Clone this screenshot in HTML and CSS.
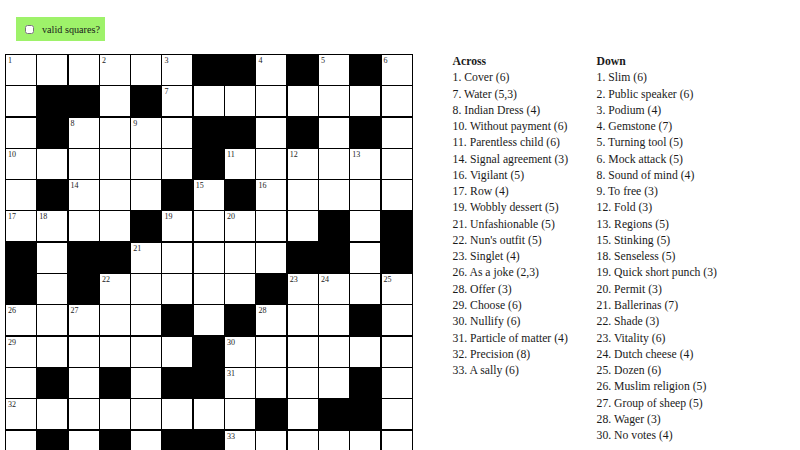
FILE: index.html
```html
<!DOCTYPE html>
<html>
<head>
<meta charset="utf-8">
<link rel="stylesheet" href="styles.css">
</head>
<body>
<div class="toolbar">
  <label class="valid"><input type="checkbox" class="check"><span>valid squares?</span></label>
</div>
<div class="main">
  <div class="grid" id="grid">
    <div class="c"><span class="n">1</span></div><div class="c"></div><div class="c"></div><div class="c"><span class="n">2</span></div><div class="c"></div><div class="c"><span class="n">3</span></div><div class="c b"></div><div class="c b"></div><div class="c"><span class="n">4</span></div><div class="c b"></div><div class="c"><span class="n">5</span></div><div class="c b"></div><div class="c"><span class="n">6</span></div>
    <div class="c"></div><div class="c b"></div><div class="c b"></div><div class="c"></div><div class="c b"></div><div class="c"><span class="n">7</span></div><div class="c"></div><div class="c"></div><div class="c"></div><div class="c"></div><div class="c"></div><div class="c"></div><div class="c"></div>
    <div class="c"></div><div class="c b"></div><div class="c"><span class="n">8</span></div><div class="c"></div><div class="c"><span class="n">9</span></div><div class="c"></div><div class="c b"></div><div class="c b"></div><div class="c"></div><div class="c b"></div><div class="c"></div><div class="c b"></div><div class="c"></div>
    <div class="c"><span class="n">10</span></div><div class="c"></div><div class="c"></div><div class="c"></div><div class="c"></div><div class="c"></div><div class="c b"></div><div class="c"><span class="n">11</span></div><div class="c"></div><div class="c"><span class="n">12</span></div><div class="c"></div><div class="c"><span class="n">13</span></div><div class="c"></div>
    <div class="c"></div><div class="c b"></div><div class="c"><span class="n">14</span></div><div class="c"></div><div class="c"></div><div class="c b"></div><div class="c"><span class="n">15</span></div><div class="c b"></div><div class="c"><span class="n">16</span></div><div class="c"></div><div class="c"></div><div class="c"></div><div class="c"></div>
    <div class="c"><span class="n">17</span></div><div class="c"><span class="n">18</span></div><div class="c"></div><div class="c"></div><div class="c b"></div><div class="c"><span class="n">19</span></div><div class="c"></div><div class="c"><span class="n">20</span></div><div class="c"></div><div class="c"></div><div class="c b"></div><div class="c"></div><div class="c b"></div>
    <div class="c b"></div><div class="c"></div><div class="c b"></div><div class="c b"></div><div class="c"><span class="n">21</span></div><div class="c"></div><div class="c"></div><div class="c"></div><div class="c"></div><div class="c b"></div><div class="c b"></div><div class="c"></div><div class="c b"></div>
    <div class="c b"></div><div class="c"></div><div class="c b"></div><div class="c"><span class="n">22</span></div><div class="c"></div><div class="c"></div><div class="c"></div><div class="c"></div><div class="c b"></div><div class="c"><span class="n">23</span></div><div class="c"><span class="n">24</span></div><div class="c"></div><div class="c"><span class="n">25</span></div>
    <div class="c"><span class="n">26</span></div><div class="c"></div><div class="c"><span class="n">27</span></div><div class="c"></div><div class="c"></div><div class="c b"></div><div class="c"></div><div class="c b"></div><div class="c"><span class="n">28</span></div><div class="c"></div><div class="c"></div><div class="c b"></div><div class="c"></div>
    <div class="c"><span class="n">29</span></div><div class="c"></div><div class="c"></div><div class="c"></div><div class="c"></div><div class="c"></div><div class="c b"></div><div class="c"><span class="n">30</span></div><div class="c"></div><div class="c"></div><div class="c"></div><div class="c"></div><div class="c"></div>
    <div class="c"></div><div class="c b"></div><div class="c"></div><div class="c b"></div><div class="c"></div><div class="c b"></div><div class="c b"></div><div class="c"><span class="n">31</span></div><div class="c"></div><div class="c"></div><div class="c"></div><div class="c b"></div><div class="c"></div>
    <div class="c"><span class="n">32</span></div><div class="c"></div><div class="c"></div><div class="c"></div><div class="c"></div><div class="c"></div><div class="c"></div><div class="c"></div><div class="c b"></div><div class="c"></div><div class="c b"></div><div class="c b"></div><div class="c"></div>
    <div class="c"></div><div class="c b"></div><div class="c"></div><div class="c b"></div><div class="c"></div><div class="c b"></div><div class="c b"></div><div class="c"><span class="n">33</span></div><div class="c"></div><div class="c"></div><div class="c"></div><div class="c"></div><div class="c"></div>
  </div>
  <div class="clues">
    <ul class="list">
      <li class="head">Across</li>
      <li>1. Cover (6)</li>
      <li>7. Water (5,3)</li>
      <li>8. Indian Dress (4)</li>
      <li>10. Without payment (6)</li>
      <li>11. Parentless child (6)</li>
      <li>14. Signal agreement (3)</li>
      <li>16. Vigilant (5)</li>
      <li>17. Row (4)</li>
      <li>19. Wobbly dessert (5)</li>
      <li>21. Unfashionable (5)</li>
      <li>22. Nun's outfit (5)</li>
      <li>23. Singlet (4)</li>
      <li>26. As a joke (2,3)</li>
      <li>28. Offer (3)</li>
      <li>29. Choose (6)</li>
      <li>30. Nullify (6)</li>
      <li>31. Particle of matter (4)</li>
      <li>32. Precision (8)</li>
      <li>33. A sally (6)</li>
    </ul>
    <ul class="list">
      <li class="head">Down</li>
      <li>1. Slim (6)</li>
      <li>2. Public speaker (6)</li>
      <li>3. Podium (4)</li>
      <li>4. Gemstone (7)</li>
      <li>5. Turning tool (5)</li>
      <li>6. Mock attack (5)</li>
      <li>8. Sound of mind (4)</li>
      <li>9. To free (3)</li>
      <li>12. Fold (3)</li>
      <li>13. Regions (5)</li>
      <li>15. Stinking (5)</li>
      <li>18. Senseless (5)</li>
      <li>19. Quick short punch (3)</li>
      <li>20. Permit (3)</li>
      <li>21. Ballerinas (7)</li>
      <li>22. Shade (3)</li>
      <li>23. Vitality (6)</li>
      <li>24. Dutch cheese (4)</li>
      <li>25. Dozen (6)</li>
      <li>26. Muslim religion (5)</li>
      <li>27. Group of sheep (5)</li>
      <li>28. Wager (3)</li>
      <li>30. No votes (4)</li>
    </ul>
  </div>
</div>
</body>
</html>
```

FILE: styles.css
```css
html, body {
  margin: 0;
  padding: 0;
  background: #fff;
}
body {
  padding: 5px;
  font-family: "Liberation Serif", "Times New Roman", serif;
  font-size: 10px;
  color: #111;
  overflow: hidden;
}
.toolbar {
  padding: 12px 0 0 11px;
  height: 49px;
  box-sizing: border-box;
}
.valid {
  display: inline-flex;
  align-items: center;
  width: 89px;
  height: 24px;
  box-sizing: border-box;
  padding-left: 9px;
  background: #9ef26a;
  font-size: 10.2px;
  color: #1a1a1a;
}
.check {
  width: 9px;
  height: 9px;
  margin: 0 8px 0 0;
}
.main {
  display: flex;
  align-items: flex-start;
}
.grid {
  display: grid;
  grid-template-columns: repeat(13, 30px);
  grid-auto-rows: 30px;
  gap: 1.3px;
  padding: 1px;
  background: #000;
  width: max-content;
  flex: none;
}
.c {
  background: #fff;
  position: relative;
}
.c.b {
  background: #000;
}
.n {
  position: absolute;
  left: 2px;
  top: 1px;
  font-size: 8px;
  line-height: 9px;
  color: #222;
}
.clues {
  display: flex;
  margin-left: 40px;
}
.list {
  list-style: none;
  margin: 0;
  padding: 0;
  width: 144px;
  font-size: 11.7px;
  line-height: 16.26px;
  color: #1a1a1a;
}
.head {
  font-weight: bold;
}
```
